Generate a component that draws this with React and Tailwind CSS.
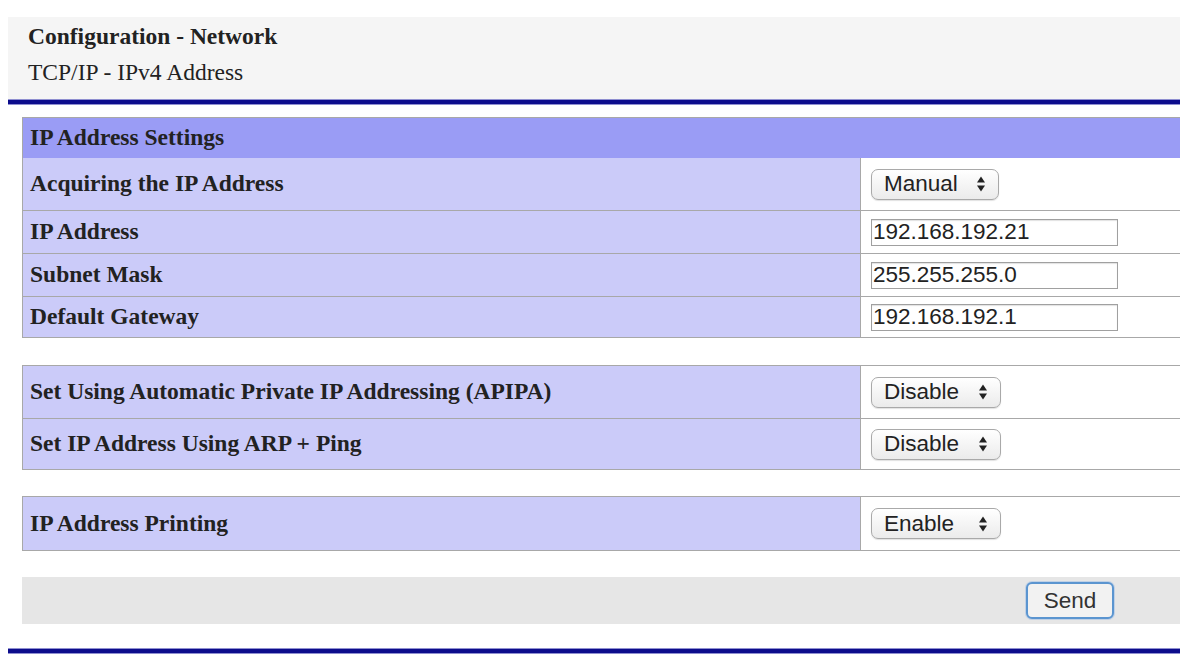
import React from 'react';

const serif = { fontFamily: '"Liberation Serif", "Times New Roman", serif' };

function Arrows() {
  return (
    <svg width="10" height="18" viewBox="0 0 10 18" className="ml-auto">
      <path d="M5 1.5 L9 7.5 L1 7.5 Z" fill="#222" />
      <path d="M5 16.5 L9 10.5 L1 10.5 Z" fill="#222" />
    </svg>
  );
}

function FakeSelect({ value, width }) {
  return (
    <div
      className={`flex items-center h-[31px] ${width} pl-[12px] pr-[12px] rounded-[7px] border border-[#a9a9a9] bg-gradient-to-b from-[#ffffff] to-[#ebebeb] text-[22.5px] text-[#222] font-['Liberation_Sans',Arial,sans-serif] shadow-[0_1px_1px_rgba(0,0,0,0.12)]`}
    >
      <span>{value}</span>
      <Arrows />
    </div>
  );
}

function TextBox({ value }) {
  return (
    <div className="flex items-center h-[27px] w-[247px] border border-[#a0a0a0] bg-white pl-[1px] text-[22.5px] text-[#222] font-['Liberation_Sans',Arial,sans-serif] shadow-[inset_0_1px_1px_rgba(0,0,0,0.12)]">
      {value}
    </div>
  );
}

function Row({ label, height, children, first }) {
  return (
    <div className={`flex ${height} ${first ? '' : 'border-t border-[#a8a8a8]'}`}>
      <div
        className="w-[838px] bg-[#cbcbf9] flex items-center pl-[7px] text-[23.5px] font-bold text-[#222] border-r border-[#a8a8a8]"
        style={serif}
      >
        {label}
      </div>
      <div className="flex-1 bg-white flex items-center pl-[10px]">{children}</div>
    </div>
  );
}

export default function App() {
  return (
    <div className="w-[1192px] h-[668px] bg-white pt-[17px] overflow-hidden">
      <div className="ml-[8px] w-[1172px]">
        <div className="bg-[#f5f5f5] h-[82px] px-[20px] pt-[5px]" style={serif}>
          <div className="text-[23.5px] font-bold text-[#222] leading-[28px]">Configuration - Network</div>
          <div className="text-[23.5px] text-[#222] leading-[28px] mt-[8px]">TCP/IP - IPv4 Address</div>
        </div>
        <div className="h-[6px] bg-[#0c0c8c] border-y border-[#8f8fd0]"></div>

        <div className="ml-[14px] mt-[12px] w-[1158px]">
          <div className="border-t border-l border-b border-[#a8a8a8]">
            <div
              className="h-[40px] bg-[#9a9cf5] flex items-center pl-[7px] text-[23.5px] font-bold text-[#222]"
              style={serif}
            >
              IP Address Settings
            </div>
            <Row label="Acquiring the IP Address" height="h-[52px]" first>
              <FakeSelect value="Manual" width="w-[128px]" />
            </Row>
            <Row label="IP Address" height="h-[43px]">
              <TextBox value="192.168.192.21" />
            </Row>
            <Row label="Subnet Mask" height="h-[43px]">
              <TextBox value="255.255.255.0" />
            </Row>
            <Row label="Default Gateway" height="h-[41px]">
              <TextBox value="192.168.192.1" />
            </Row>
          </div>

          <div className="mt-[27px] border-t border-l border-b border-[#a8a8a8]">
            <Row label="Set Using Automatic Private IP Addressing (APIPA)" height="h-[52px]" first>
              <FakeSelect value="Disable" width="w-[130px]" />
            </Row>
            <Row label="Set IP Address Using ARP + Ping" height="h-[51px]">
              <FakeSelect value="Disable" width="w-[130px]" />
            </Row>
          </div>

          <div className="mt-[26px] border-t border-l border-b border-[#a8a8a8]">
            <Row label="IP Address Printing" height="h-[53px]" first>
              <FakeSelect value="Enable" width="w-[130px]" />
            </Row>
          </div>

          <div className="mt-[26px] h-[47px] bg-[#e6e6e6] flex items-center">
            <div className="ml-[1004px] h-[37px] w-[88px] rounded-[6px] border-2 border-[#5b95d0] bg-[#f2f2f2] flex items-center justify-center text-[22.5px] text-[#333] font-['Liberation_Sans',Arial,sans-serif] shadow-[0_0_0_1px_rgba(120,170,230,0.35)]">
              Send
            </div>
          </div>
        </div>

        <div className="mt-[24px] h-[6px] bg-[#0c0c8c] border-y border-[#8f8fd0]"></div>
      </div>
    </div>
  );
}
